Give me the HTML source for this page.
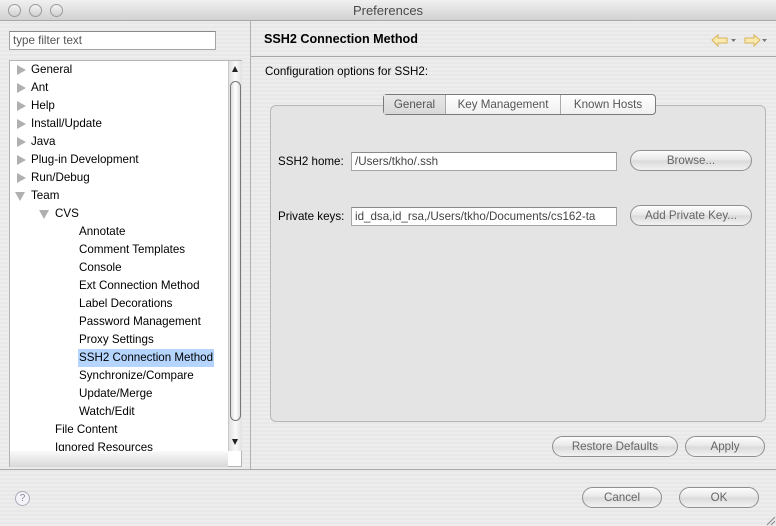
<!DOCTYPE html>
<html><head><style>
*{margin:0;padding:0;box-sizing:border-box}
body{width:776px;height:526px;overflow:hidden;background:#ececec;font-family:"Liberation Sans",sans-serif;font-size:11.6px;color:#000;position:relative;
background-image:repeating-linear-gradient(#ededed 0 2px,#e8e8e8 2px 4px)}
.a{position:absolute}
.title{left:0;top:0;width:776px;height:21px;background:linear-gradient(#f0f0f0,#d2d2d2);border-bottom:1px solid #a8a8a8;text-align:center;font-size:13px;line-height:21px;color:#4a4a4a}
.dot{width:13px;height:13px;border-radius:50%;border:1px solid #9a9a9a;background:linear-gradient(#f4f4f4,#d0d0d0);top:4px}
.inp{background:#fff;border:1px solid #a5a5a5;border-top-color:#8a8a8a;height:19px;line-height:17px;padding-left:3px;font-size:11.6px;color:#444;overflow:hidden;white-space:nowrap}
.tree{left:9px;top:60px;width:233px;height:407px;background:#fff;border:1px solid #b5b5b5}
.row{position:absolute;height:18px;line-height:18px;white-space:nowrap}
.tri{position:absolute;width:0;height:0;border-left:9px solid #b0b0b0;border-top:5px solid transparent;border-bottom:5px solid transparent;top:4px}
.trd{position:absolute;width:0;height:0;border-top:9px solid #b0b0b0;border-left:5px solid transparent;border-right:5px solid transparent;top:5px}
.btn{border:1px solid #8f8f8f;border-radius:11px;background:linear-gradient(#fdfdfd,#e6e6e6 50%,#dadada 51%,#f2f2f2);text-align:center;line-height:19px;color:#666;height:21px}
</style></head><body>
<div class="a title">Preferences</div>
<div class="a dot" style="left:8px"></div><div class="a dot" style="left:29px"></div><div class="a dot" style="left:50px"></div>

<div class="a inp" style="left:9px;top:31px;width:207px;color:#555">type filter text</div>
<div class="a tree">
 <div class="row" style="left:7px;top:0"><div class="tri" style="left:0"></div><span style="margin-left:14px">General</span></div>
 <div class="row" style="left:7px;top:18px"><div class="tri" style="left:0"></div><span style="margin-left:14px">Ant</span></div>
 <div class="row" style="left:7px;top:36px"><div class="tri" style="left:0"></div><span style="margin-left:14px">Help</span></div>
 <div class="row" style="left:7px;top:54px"><div class="tri" style="left:0"></div><span style="margin-left:14px">Install/Update</span></div>
 <div class="row" style="left:7px;top:72px"><div class="tri" style="left:0"></div><span style="margin-left:14px">Java</span></div>
 <div class="row" style="left:7px;top:90px"><div class="tri" style="left:0"></div><span style="margin-left:14px">Plug-in Development</span></div>
 <div class="row" style="left:7px;top:108px"><div class="tri" style="left:0"></div><span style="margin-left:14px">Run/Debug</span></div>
 <div class="row" style="left:5px;top:126px"><div class="trd" style="left:0"></div><span style="margin-left:16px">Team</span></div>
 <div class="row" style="left:29px;top:144px"><div class="trd" style="left:0"></div><span style="margin-left:16px">CVS</span></div>
 <div class="row" style="left:69px;top:162px">Annotate</div>
 <div class="row" style="left:69px;top:180px">Comment Templates</div>
 <div class="row" style="left:69px;top:198px">Console</div>
 <div class="row" style="left:69px;top:216px">Ext Connection Method</div>
 <div class="row" style="left:69px;top:234px">Label Decorations</div>
 <div class="row" style="left:69px;top:252px">Password Management</div>
 <div class="row" style="left:69px;top:270px">Proxy Settings</div>
 <div class="row" style="left:68px;top:288px;background:#b5d5ff;padding:0 1px">SSH2 Connection Method</div>
 <div class="row" style="left:69px;top:306px">Synchronize/Compare</div>
 <div class="row" style="left:69px;top:324px">Update/Merge</div>
 <div class="row" style="left:69px;top:342px">Watch/Edit</div>
 <div class="row" style="left:45px;top:360px">File Content</div>
 <div class="row" style="left:45px;top:378px;height:12px;overflow:hidden">Ignored Resources</div>
 <div class="a" style="left:0;top:390px;width:218px;height:16px;background:linear-gradient(#fafafa,#d8d8d8)"></div>
 <div class="a" style="left:218px;top:0;width:14px;height:390px;background:linear-gradient(90deg,#e0e0e0,#fafafa,#e0e0e0);border-left:1px solid #c8c8c8">
  <div class="a" style="left:3px;top:5px;border-bottom:6px solid #222;border-left:3px solid transparent;border-right:3px solid transparent"></div>
  <div class="a" style="left:1px;top:20px;width:11px;height:340px;border:1px solid #777;border-radius:6px;background:linear-gradient(90deg,#ddd,#fff,#ddd)"></div>
  <div class="a" style="left:3px;top:378px;border-top:6px solid #222;border-left:3px solid transparent;border-right:3px solid transparent"></div>
 </div>
</div>
<div class="a" style="left:250px;top:21px;width:1px;height:448px;background:#b0b0b0"></div>

<div class="a" style="left:264px;top:32px;font-weight:bold;font-size:12.6px">SSH2 Connection Method</div>
<svg class="a" style="left:710px;top:32px" width="60" height="16"><path d="M2 8 L8 3 V6 H17 V11 H8 V14 Z" fill="#fbe9b0" stroke="#d7b45a"/><path d="M21 7 h5 l-2.5 3z" fill="#777"/><path d="M50 8 L44 3 V6 H35 V11 H44 V14 Z" fill="#fbe9b0" stroke="#d7b45a"/><path d="M52 7 h5 l-2.5 3z" fill="#777"/></svg>
<div class="a" style="left:251px;top:56px;width:525px;height:1px;background:#a8a8a8"></div>
<div class="a" style="left:265px;top:65px">Configuration options for SSH2:</div>

<div class="a" style="left:270px;top:105px;width:496px;height:317px;border:1px solid #b8b8b8;border-radius:6px;background:#e4e4e4"></div>
<div class="a" style="left:383px;top:94px;width:273px;height:21px;border:1px solid #7a7a7a;border-radius:4px;background:linear-gradient(#fff,#f0f0f0);display:flex;color:#555;line-height:19px">
 <div style="width:62px;text-align:center;background:linear-gradient(#e8e8e8,#d8d8d8);border-right:1px solid #aaa">General</div>
 <div style="width:115px;text-align:center;border-right:1px solid #aaa">Key Management</div>
 <div style="flex:1;text-align:center">Known Hosts</div>
</div>
<div class="a" style="left:278px;top:155px">SSH2 home:</div>
<div class="a inp" style="left:351px;top:152px;width:266px">/Users/tkho/.ssh</div>
<div class="a btn" style="left:630px;top:150px;width:122px">Browse...</div>
<div class="a" style="left:278px;top:210px">Private keys:</div>
<div class="a inp" style="left:351px;top:207px;width:266px">id_dsa,id_rsa,/Users/tkho/Documents/cs162-ta</div>
<div class="a btn" style="left:630px;top:205px;width:122px">Add Private Key...</div>

<div class="a btn" style="left:552px;top:436px;width:126px">Restore Defaults</div>
<div class="a btn" style="left:685px;top:436px;width:80px">Apply</div>
<div class="a" style="left:0;top:469px;width:776px;height:1px;background:#a8a8a8"></div>
<div class="a" style="left:15px;top:491px;width:15px;height:15px;border:1px solid #aab;border-radius:50%;background:#f4f4f8;font-size:10px;line-height:13px;text-align:center;color:#889">?</div>
<div class="a btn" style="left:582px;top:487px;width:80px">Cancel</div>
<div class="a btn" style="left:679px;top:487px;width:80px">OK</div>
<svg class="a" style="left:764px;top:514px" width="12" height="12"><path d="M11 3 L3 11 M11 7 L7 11" stroke="#888"/></svg>
</body></html>
